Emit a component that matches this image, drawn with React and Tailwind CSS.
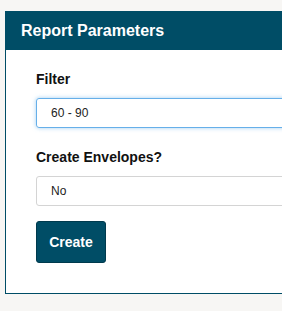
import { useState } from 'react';

export default function App() {
  const [filter, setFilter] = useState('60 - 90');
  const [envelopes, setEnvelopes] = useState('No');

  return (
    <div className="h-[311px] w-[282px] overflow-hidden bg-[#f7f6f4] pl-[5px] pt-[11px] font-['Liberation_Sans',Arial,sans-serif]">
      <div className="w-[320px] border border-[#004d66] bg-white">
        {/* Header */}
        <div className="flex h-[38px] items-center bg-[#004d66] px-[15px]">
          <h2 className="text-[16px] font-bold text-white">Report Parameters</h2>
        </div>

        {/* Body */}
        <div className="pb-[30px] pl-[30px] pt-[19px]">
          <label className="mb-[9px] block text-[14px] font-bold leading-[20px] text-[#111]">Filter</label>
          <input
            type="text"
            value={filter}
            onChange={(e) => setFilter(e.target.value)}
            className="block h-[30px] w-[280px] rounded-[3px] border border-[#66afe9] px-[14px] text-[12px] text-[#222] shadow-[0_0_4px_rgba(102,175,233,0.6)] outline-none"
          />

          <label className="mb-[9px] mt-[19px] block text-[14px] font-bold leading-[20px] text-[#111]">Create Envelopes?</label>
          <select
            value={envelopes}
            onChange={(e) => setEnvelopes(e.target.value)}
            className="block h-[30px] w-[280px] appearance-none rounded-[3px] border border-[#d4d4d4] bg-white px-[14px] text-[12px] text-[#222] outline-none"
          >
            <option>No</option>
            <option>Yes</option>
          </select>

          <button
            type="button"
            className="mt-[15px] h-[42px] w-[70px] rounded-[3px] border border-[#003a4d] bg-[#004d66] text-[14px] font-bold text-white"
          >
            Create
          </button>
        </div>
      </div>
    </div>
  );
}
